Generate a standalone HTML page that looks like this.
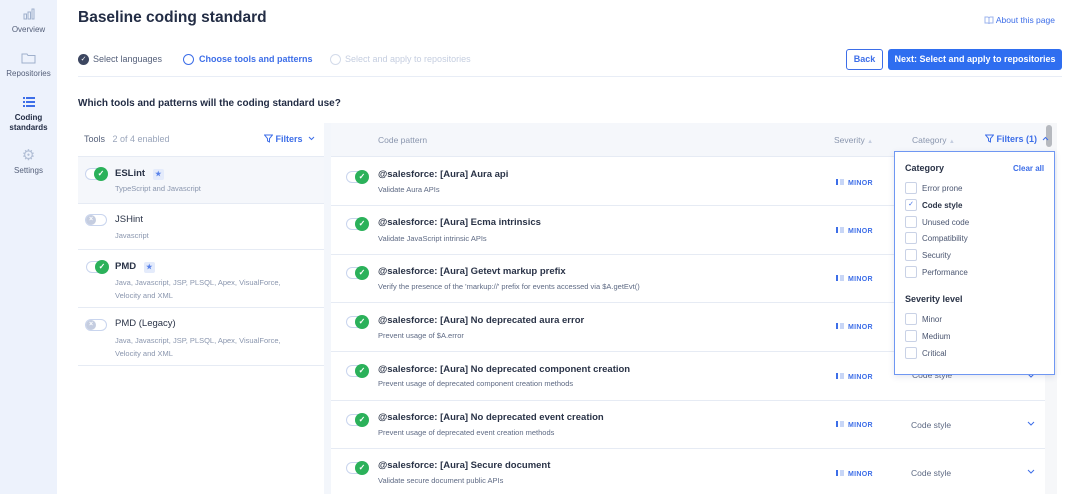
<!DOCTYPE html>
<html><head><meta charset="utf-8"><style>
*{box-sizing:border-box;margin:0;padding:0}
body{width:1068px;height:494px;overflow:hidden;background:#fff;font-family:"Liberation Sans",sans-serif;color:#2a3347;position:relative}
.a{position:absolute}
.side{left:0;top:0;width:57px;height:494px;background:#edf2fc}
.nav{position:absolute;left:0;width:57px;text-align:center;font-size:8px;color:#55607a;line-height:10px}
.nav.on{color:#232d45;font-weight:bold}
.t{white-space:nowrap}
.tog{position:absolute;width:22px;height:12px;border-radius:6px;background:#fff;border:1px solid #c9d5ee}
.tog i{position:absolute;top:-2px;width:14px;height:14px;border-radius:50%;background:#2bb15a;right:-2px;color:#fff;font-size:8px;font-style:normal;text-align:center;line-height:14px;font-weight:bold}
.tog.off i{left:0;right:auto;background:#c5cde0;top:0;width:10px;height:10px;line-height:10px;font-size:7px}
.row{position:absolute;left:331px;width:714px;border-top:1px solid #e6ebf4}
.pt{font-size:9.5px;font-weight:bold;color:#2a3347}
.pd{font-size:7.5px;color:#5e6a84}
.sev{font-size:7px;font-weight:bold;color:#3d6ee8;letter-spacing:.3px}
.sev b{display:inline-block;width:8px;height:6px;border-left:2px solid #3d6ee8;border-right:4px solid #c8d6f6;margin-right:4px;vertical-align:0}
.cb{position:absolute;left:905px;width:12px;height:12px;border:1px solid #c9d2e6;border-radius:2px;background:#fff}
.cl{position:absolute;left:922px;font-size:8px;color:#4a5570}
</style></head><body>
<div class="a side"></div>
<div class="nav" style="top:8px"><svg width="12" height="12" viewBox="0 0 12 12" fill="none" stroke="#9fb0cc"><rect x="1" y="6" width="2.5" height="5"/><rect x="5" y="4" width="2.5" height="7"/><rect x="9" y="1" width="2" height="10"/></svg><div style="margin-top:2px">Overview</div></div>
<div class="nav" style="top:52px"><svg width="15" height="12" viewBox="0 0 15 12" fill="none" stroke="#9fb0cc"><path d="M1 2h5l1 1.5h7V11H1z"/></svg><div style="margin-top:2px">Repositories</div></div>
<div class="nav on" style="top:97px"><svg width="12" height="10" viewBox="0 0 12 10" fill="#3d6ee8"><rect x="0" y="0" width="2" height="2"/><rect x="3" y="0" width="9" height="2"/><rect x="0" y="4" width="2" height="2"/><rect x="3" y="4" width="9" height="2"/><rect x="0" y="8" width="2" height="2"/><rect x="3" y="8" width="9" height="2"/></svg><div style="margin-top:3px">Coding<br>standards</div></div>
<div class="nav" style="top:149px"><div style="color:#b2bfd6;font-size:15px;line-height:14px">⚙</div><div style="margin-top:3px">Settings</div></div>

<div class="a t" style="left:78px;top:9px;font-size:15.5px;font-weight:bold;color:#232d45">Baseline coding standard</div>
<div class="a t" style="left:984px;top:15px;font-size:8.5px;color:#3d6ee8"><svg width="10" height="8" viewBox="0 0 10 8" fill="none" stroke="#9db4ee" style="vertical-align:-1px"><path d="M1 1h3l1 1 1-1h3v6H6L5 7.5 4 7H1z M5 2v5.5"/></svg> About this page</div>

<div class="a" style="left:78px;top:54px;width:11px;height:11px;border-radius:50%;background:#3c4660;color:#fff;font-size:7px;text-align:center;line-height:11px">✓</div>
<div class="a t" style="left:93px;top:54px;font-size:9px;color:#55607a">Select languages</div>
<div class="a" style="left:183px;top:54px;width:11px;height:11px;border-radius:50%;border:1px solid #3d6ee8"></div>
<div class="a t" style="left:199px;top:54px;font-size:9px;color:#3d6ee8;font-weight:bold">Choose tools and patterns</div>
<div class="a" style="left:330px;top:54px;width:11px;height:11px;border-radius:50%;border:1px solid #d3dbea"></div>
<div class="a t" style="left:345px;top:54px;font-size:9px;color:#c5cee0">Select and apply to repositories</div>
<div class="a" style="left:846px;top:49px;width:37px;height:21px;border:1px solid #3d6ee8;border-radius:3px;font-size:9px;color:#3d6ee8;font-weight:bold;text-align:center;line-height:19px">Back</div>
<div class="a" style="left:888px;top:49px;width:174px;height:21px;background:#2f6ef0;border-radius:3px;font-size:9px;color:#fff;font-weight:bold;text-align:center;line-height:21px">Next: Select and apply to repositories</div>
<div class="a" style="left:78px;top:76px;width:984px;height:1px;background:#e8edf6"></div>
<div class="a t" style="left:78px;top:98px;font-size:10px;font-weight:bold;color:#232d45">Which tools and patterns will the coding standard use?</div>

<div class="a" style="left:324px;top:123px;width:7px;height:371px;background:#f3f6fb"></div>
<div class="a" style="left:1045px;top:123px;width:12px;height:371px;background:#f6f7f9"></div>
<div class="a" style="left:1046px;top:125px;width:6px;height:22px;border-radius:3px;background:#b6b9bf"></div>

<div class="a t" style="left:84px;top:134px;font-size:9px;color:#55607a">Tools <span style="color:#9aa5bb;margin-left:5px">2 of 4 enabled</span></div>
<div class="a t" style="left:264px;top:134px;font-size:9px;color:#3d6ee8;font-weight:bold"><svg width="9" height="9" viewBox="0 0 9 9" fill="none" stroke="#3d6ee8" style="vertical-align:-1px"><path d="M0.5 1h8L5.5 4.5V8L3.5 7V4.5z"/></svg> Filters <svg width="7" height="5" viewBox="0 0 7 5" fill="none" stroke="#3d6ee8" style="margin-left:3px;vertical-align:1px"><path d="M1 1l2.5 2.5L6 1"/></svg></div>
<div class="a" style="left:78px;top:156px;width:246px;height:47px;background:#f5f7fb;border-top:1px solid #e6ebf4"></div>
<div class="tog" style="left:85px;top:168px"><i>✓</i></div>
<div class="a t" style="left:115px;top:168px;font-size:9.5px;font-weight:bold">ESLint <span style="display:inline-block;width:11px;height:11px;background:#e4ebfb;color:#5a83ea;font-size:7px;text-align:center;line-height:11px;margin-left:5px;border-radius:2px">★</span></div>
<div class="a t" style="left:115px;top:184px;font-size:7.5px;color:#8a96ae">TypeScript and Javascript</div>
<div class="a" style="left:78px;top:203px;width:246px;height:1px;background:#e6ebf4"></div>
<div class="tog off" style="left:85px;top:214px"><i>×</i></div>
<div class="a t" style="left:115px;top:214px;font-size:9.5px">JSHint</div>
<div class="a t" style="left:115px;top:231px;font-size:7.5px;color:#8a96ae">Javascript</div>
<div class="a" style="left:78px;top:249px;width:246px;height:1px;background:#e6ebf4"></div>
<div class="tog" style="left:86px;top:261px"><i>✓</i></div>
<div class="a t" style="left:115px;top:261px;font-size:9.5px;font-weight:bold">PMD <span style="display:inline-block;width:11px;height:11px;background:#e4ebfb;color:#5a83ea;font-size:7px;text-align:center;line-height:11px;margin-left:5px;border-radius:2px">★</span></div>
<div class="a" style="left:115px;top:277px;font-size:7.5px;color:#8a96ae;line-height:12.5px">Java, Javascript, JSP, PLSQL, Apex, VisualForce,<br>Velocity and XML</div>
<div class="a" style="left:78px;top:307px;width:246px;height:1px;background:#e6ebf4"></div>
<div class="tog off" style="left:85px;top:319px"><i>×</i></div>
<div class="a t" style="left:115px;top:318px;font-size:9.5px">PMD (Legacy)</div>
<div class="a" style="left:115px;top:335px;font-size:7.5px;color:#8a96ae;line-height:12.5px">Java, Javascript, JSP, PLSQL, Apex, VisualForce,<br>Velocity and XML</div>
<div class="a" style="left:78px;top:365px;width:246px;height:1px;background:#e6ebf4"></div>

<div class="a" style="left:331px;top:123px;width:714px;height:33px;background:#f5f7fb"></div>
<div class="a t" style="left:378px;top:135px;font-size:8.5px;color:#8a96ae">Code pattern</div>
<div class="a t" style="left:834px;top:135px;font-size:8.5px;color:#8a96ae">Severity <span style="color:#c5cee0;font-size:6px">▲</span></div>
<div class="a t" style="left:912px;top:135px;font-size:8.5px;color:#8a96ae">Category <span style="color:#c5cee0;font-size:6px">▲</span></div>
<div class="a t" style="left:985px;top:134px;font-size:9px;color:#3d6ee8;font-weight:bold"><svg width="9" height="9" viewBox="0 0 9 9" fill="none" stroke="#3d6ee8" style="vertical-align:-1px"><path d="M0.5 1h8L5.5 4.5V8L3.5 7V4.5z"/></svg> Filters (1) <svg width="7" height="5" viewBox="0 0 7 5" fill="none" stroke="#3d6ee8" style="margin-left:2px;vertical-align:1px"><path d="M1 4l2.5-2.5L6 4"/></svg></div>

<div class="row" style="top:156px;height:49px"><div class="tog" style="left:15px;top:14px"><i>✓</i></div><div class="a t pt" style="left:47px;top:12px">@salesforce: [Aura] Aura api</div><div class="a t pd" style="left:47px;top:28px">Validate Aura APIs</div><div class="a t sev" style="left:505px;top:22px"><b></b>MINOR</div></div>
<div class="row" style="top:205px;height:49px"><div class="tog" style="left:15px;top:12px"><i>✓</i></div><div class="a t pt" style="left:47px;top:11px">@salesforce: [Aura] Ecma intrinsics</div><div class="a t pd" style="left:47px;top:28px">Validate JavaScript intrinsic APIs</div><div class="a t sev" style="left:505px;top:21px"><b></b>MINOR</div></div>
<div class="row" style="top:254px;height:48px"><div class="tog" style="left:15px;top:12px"><i>✓</i></div><div class="a t pt" style="left:47px;top:11px">@salesforce: [Aura] Getevt markup prefix</div><div class="a t pd" style="left:47px;top:27px">Verify the presence of the 'markup://' prefix for events accessed via $A.getEvt()</div><div class="a t sev" style="left:505px;top:20px"><b></b>MINOR</div></div>
<div class="row" style="top:302px;height:49px"><div class="tog" style="left:15px;top:13px"><i>✓</i></div><div class="a t pt" style="left:47px;top:12px">@salesforce: [Aura] No deprecated aura error</div><div class="a t pd" style="left:47px;top:28px">Prevent usage of $A.error</div><div class="a t sev" style="left:505px;top:20px"><b></b>MINOR</div></div>
<div class="row" style="top:351px;height:49px"><div class="tog" style="left:15px;top:13px"><i>✓</i></div><div class="a t pt" style="left:47px;top:12px">@salesforce: [Aura] No deprecated component creation</div><div class="a t pd" style="left:47px;top:27px">Prevent usage of deprecated component creation methods</div><div class="a t sev" style="left:505px;top:21px"><b></b>MINOR</div><svg class="a" style="left:696px;top:21px" width="8" height="5" viewBox="0 0 8 5" fill="none" stroke="#3d6ee8"><path d="M1 1l3 3 3-3"/></svg></div>
<div class="row" style="top:400px;height:48px"><div class="tog" style="left:15px;top:13px"><i>✓</i></div><div class="a t pt" style="left:47px;top:11px">@salesforce: [Aura] No deprecated event creation</div><div class="a t pd" style="left:47px;top:27px">Prevent usage of deprecated event creation methods</div><div class="a t sev" style="left:505px;top:20px"><b></b>MINOR</div><div class="a t" style="left:580px;top:19px;font-size:8.5px;color:#5e6a84">Code style</div><svg class="a" style="left:696px;top:20px" width="8" height="5" viewBox="0 0 8 5" fill="none" stroke="#3d6ee8"><path d="M1 1l3 3 3-3"/></svg></div>
<div class="row" style="top:448px;height:46px"><div class="tog" style="left:15px;top:13px"><i>✓</i></div><div class="a t pt" style="left:47px;top:11px">@salesforce: [Aura] Secure document</div><div class="a t pd" style="left:47px;top:27px">Validate secure document public APIs</div><div class="a t sev" style="left:505px;top:21px"><b></b>MINOR</div><div class="a t" style="left:580px;top:19px;font-size:8.5px;color:#5e6a84">Code style</div><svg class="a" style="left:696px;top:20px" width="8" height="5" viewBox="0 0 8 5" fill="none" stroke="#3d6ee8"><path d="M1 1l3 3 3-3"/></svg></div>
<div class="a t" style="left:912px;top:370px;font-size:8.5px;color:#5e6a84">Code style</div>

<div class="a" style="left:894px;top:151px;width:161px;height:224px;background:#fff;border:1px solid #6f97f2;box-shadow:0 2px 6px rgba(40,60,120,.12)"></div>
<div class="a t" style="left:905px;top:163px;font-size:9px;font-weight:bold">Category</div>
<div class="a t" style="left:1013px;top:164px;font-size:8px;font-weight:bold;color:#3d6ee8">Clear all</div>
<div class="cb" style="top:182px"></div><div class="cl" style="top:184px">Error prone</div>
<div class="cb" style="top:199px;font-size:7px;color:#3d6ee8;text-align:center;line-height:10px">✓</div><div class="cl" style="top:201px;font-weight:bold;color:#2a3347">Code style</div>
<div class="cb" style="top:216px"></div><div class="cl" style="top:218px">Unused code</div>
<div class="cb" style="top:232px"></div><div class="cl" style="top:234px">Compatibility</div>
<div class="cb" style="top:249px"></div><div class="cl" style="top:251px">Security</div>
<div class="cb" style="top:266px"></div><div class="cl" style="top:268px">Performance</div>
<div class="a t" style="left:905px;top:294px;font-size:9px;font-weight:bold">Severity level</div>
<div class="cb" style="top:313px"></div><div class="cl" style="top:315px">Minor</div>
<div class="cb" style="top:330px"></div><div class="cl" style="top:332px">Medium</div>
<div class="cb" style="top:347px"></div><div class="cl" style="top:349px">Critical</div>
</body></html>
